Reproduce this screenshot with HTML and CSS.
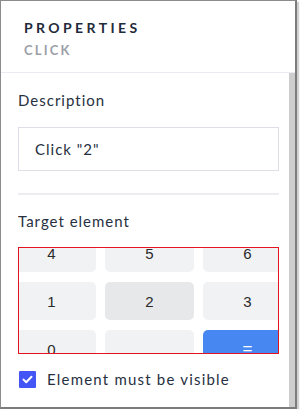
FILE: index.html
```html
<!DOCTYPE html>
<html>
<head>
<meta charset="utf-8">
<link rel="stylesheet" href="styles.css">
</head>
<body>
<div class="frame">
  <div class="header">
    <div class="title">PROPERTIES</div>
    <div class="subtitle">CLICK</div>
  </div>
  <div class="main">
    <div class="content">
      <div class="label label-desc">Description</div>
      <div class="input">Click "2"</div>
      <div class="divider"></div>
      <div class="label label-target">Target element</div>
      <div class="target">
        <div class="keys">
          <div class="key">4</div>
          <div class="key">5</div>
          <div class="key">6</div>
          <div class="key">1</div>
          <div class="key key-hover">2</div>
          <div class="key">3</div>
          <div class="key">0</div>
          <div class="key"></div>
          <div class="key key-eq">=</div>
        </div>
      </div>
      <label class="check-row">
        <span class="checkbox">
          <svg width="11" height="9" viewBox="0 0 11 9"><path d="M1.5 4.6 L4.2 7.2 L9.5 1.8" fill="none" stroke="#fff" stroke-width="2" stroke-linecap="round" stroke-linejoin="round"/></svg>
        </span>
        <span class="check-text">Element must be visible</span>
      </label>
    </div>
    <div class="scrollbar"></div>
  </div>
</div>
</body>
</html>
```

FILE: styles.css
```css
html, body {
  margin: 0;
  padding: 0;
  background: #ffffff;
}

.frame {
  box-sizing: border-box;
  width: 297px;
  height: 409px;
  border-left: 1px solid #8c8c8c;
  border-top: 1px solid #8c8c8c;
  border-right: 2px solid #7c7c7c;
  border-bottom: 2px solid #7c7c7c;
  box-shadow: 2px 2px 1px rgba(0, 0, 0, 0.18);
  background: #ffffff;
  display: flex;
  flex-direction: column;
  font-family: Lato, "Noto Sans", sans-serif;
  color: #27303f;
  overflow: hidden;
}

.header {
  box-sizing: border-box;
  height: 72px;
  flex: none;
  padding: 18px 0 0 23px;
  border-bottom: 1px solid #ebebf2;
}

.title {
  font-size: 14px;
  font-weight: 700;
  letter-spacing: 3.4px;
  line-height: 17px;
  color: #1f2a3a;
}

.subtitle {
  margin-top: 6px;
  font-size: 13px;
  font-weight: 700;
  letter-spacing: 2.2px;
  line-height: 16px;
  color: #9b9fa8;
}

.main {
  flex: 1;
  display: flex;
  min-height: 0;
}

.content {
  flex: 1;
  min-width: 0;
  padding: 0 10px 0 17px;
}

.scrollbar {
  width: 6px;
  flex: none;
  background: #cdcdcd;
}

.label {
  font-size: 15px;
  letter-spacing: 1px;
  line-height: 20px;
  color: #27303f;
}

.label-desc {
  margin-top: 17px;
}

.input {
  box-sizing: border-box;
  margin-top: 17px;
  height: 44px;
  border: 1px solid #dedee8;
  padding-left: 16px;
  font-size: 15px;
  letter-spacing: 1px;
  line-height: 42px;
  color: #27303f;
}

.divider {
  margin-top: 22px;
  height: 2px;
  background: #ececf2;
}

.label-target {
  margin-top: 16px;
}

.target {
  box-sizing: border-box;
  margin-top: 16px;
  height: 107px;
  border: 1px solid #e3141f;
  overflow: hidden;
  background: #ffffff;
}

.keys {
  display: grid;
  grid-template-columns: repeat(3, 89px);
  grid-auto-rows: 38px;
  column-gap: 9px;
  row-gap: 10px;
  margin-left: -12px;
  margin-top: -14px;
}

.key {
  background: #f1f2f4;
  border-radius: 5px;
  display: flex;
  align-items: center;
  justify-content: center;
  font-family: "Liberation Sans", Arial, sans-serif;
  font-size: 15px;
  color: #2a2a2a;
}

.key-hover {
  background: #e7e8ea;
}

.key-eq {
  background: #4787f2;
  color: #ffffff;
  font-size: 17px;
}

.check-row {
  display: flex;
  align-items: center;
  margin-top: 15px;
  gap: 11px;
}

.checkbox {
  box-sizing: border-box;
  width: 17px;
  height: 17px;
  margin-left: 1px;
  background: #4455f5;
  border-radius: 1px;
  display: flex;
  align-items: center;
  justify-content: center;
  flex: none;
}

.checkbox svg {
  display: block;
}

.check-text {
  font-size: 15px;
  letter-spacing: 1.2px;
  line-height: 20px;
  color: #27303f;
}
```
